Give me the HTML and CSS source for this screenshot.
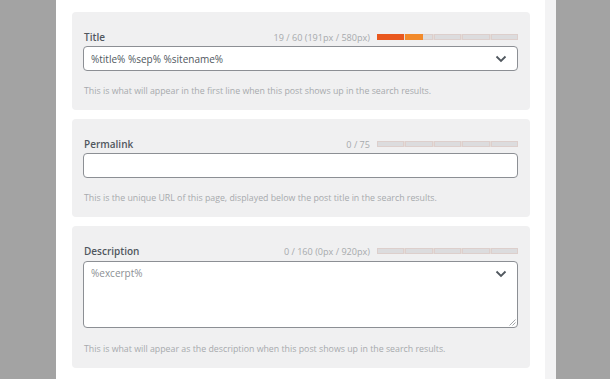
FILE: index.html
```html
<!DOCTYPE html>
<html>
<head>
<meta charset="utf-8">
<link rel="stylesheet" href="styles.css">
</head>
<body>
<div class="modal">
  <div class="content">
    <div class="card">
      <div class="head">
        <span class="label">Title</span>
        <span class="counter">19 / 60 (191px / 580px)</span>
        <div class="bar">
          <span class="seg"><i class="fill red" style="width:100%"></i></span>
          <span class="seg"><i class="fill orange" style="width:66%"></i></span>
          <span class="seg"></span>
          <span class="seg"></span>
          <span class="seg"></span>
        </div>
      </div>
      <div class="field">
        <span class="value">%title% %sep% %sitename%</span>
        <svg class="chev" width="12" height="8" viewBox="0 0 12 8"><path d="M1.5 1.5 L6 6 L10.5 1.5" fill="none" stroke="#50575e" stroke-width="1.8"/></svg>
      </div>
      <p class="help">This is what will appear in the first line when this post shows up in the search results.</p>
    </div>

    <div class="card">
      <div class="head">
        <span class="label">Permalink</span>
        <span class="counter">0 / 75</span>
        <div class="bar">
          <span class="seg"></span><span class="seg"></span><span class="seg"></span><span class="seg"></span><span class="seg"></span>
        </div>
      </div>
      <div class="field"></div>
      <p class="help">This is the unique URL of this page, displayed below the post title in the search results.</p>
    </div>

    <div class="card">
      <div class="head">
        <span class="label">Description</span>
        <span class="counter">0 / 160 (0px / 920px)</span>
        <div class="bar">
          <span class="seg"></span><span class="seg"></span><span class="seg"></span><span class="seg"></span><span class="seg"></span>
        </div>
      </div>
      <div class="field area">
        <span class="value muted">%excerpt%</span>
        <svg class="chev" width="12" height="8" viewBox="0 0 12 8"><path d="M1.5 1.5 L6 6 L10.5 1.5" fill="none" stroke="#50575e" stroke-width="1.8"/></svg>
        <svg class="grip" width="7" height="7" viewBox="0 0 7 7"><path d="M6.5 0.5 L0.5 6.5 M6.5 3.5 L3.5 6.5" stroke="#8c8f94" stroke-width="0.8"/></svg>
      </div>
      <p class="help tall">This is what will appear as the description when this post shows up in the search results.</p>
    </div>
  </div>
  <div class="track"></div>
</div>
</body>
</html>
```

FILE: styles.css
```css
html, body {
  margin: 0;
  padding: 0;
  height: 100%;
}
body {
  background: #a3a3a3;
  font-family: "Open Sans", "Noto Sans", sans-serif;
  overflow: hidden;
}
.modal {
  margin-left: 56px;
  width: 500px;
  height: 379px;
  display: flex;
  background: #fff;
}
.content {
  width: 489px;
  box-sizing: border-box;
  padding: 12px 15px 0 16px;
  display: flex;
  flex-direction: column;
  gap: 9px;
}
.track {
  width: 11px;
  background: #f3f3f4;
}
.card {
  background: #f0f0f1;
  border-radius: 4px;
  padding: 17px 12px 0 11px;
  display: flex;
  flex-direction: column;
}
.head {
  height: 16px;
  display: flex;
  align-items: center;
  margin-bottom: 1px;
}
.label {
  font-size: 10px;
  font-weight: 600;
  color: #50575e;
  padding-left: 1px;
  flex: 1;
}
.counter {
  font-size: 9.1px;
  color: #a7aaad;
  margin-right: 7px;
}
.bar {
  width: 141px;
  height: 6px;
  display: flex;
  gap: 1px;
  background: #e4dcd8;
  border-radius: 1px;
}
.seg {
  flex: 1;
  position: relative;
  background: #dcdcde;
  box-shadow: inset 0 0 0 1px rgba(225, 150, 120, 0.18);
  overflow: hidden;
}
.fill {
  position: absolute;
  left: 0;
  top: 0;
  bottom: 0;
}
.fill.red { background: #e9581e; }
.fill.orange { background: #f28a2b; }
.field {
  height: 25px;
  box-sizing: border-box;
  border: 1px solid #8c8f94;
  border-radius: 4px;
  background: #fff;
  display: flex;
  align-items: center;
  padding: 0 10px 0 7px;
  position: relative;
}
.field.area {
  height: 67px;
  margin-top: 1px;
  align-items: flex-start;
  padding-top: 4px;
}
.value {
  flex: 1;
  font-size: 10px;
  color: #50575e;
}
.value.muted {
  color: #8c8f94;
}
.chev {
  display: block;
}
.area .chev {
  margin-top: 4px;
}
.grip {
  position: absolute;
  right: 1px;
  bottom: 1px;
}
.help {
  margin: 0;
  height: 39px;
  display: flex;
  align-items: center;
  font-size: 8.8px;
  color: #a7aaad;
  padding-left: 1px;
}
.help.tall {
  height: 40px;
  padding-top: 2px;
  box-sizing: border-box;
}
```
